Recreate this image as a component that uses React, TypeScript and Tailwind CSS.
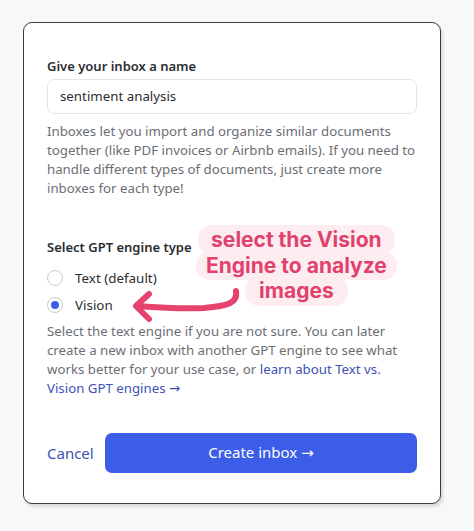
import { useState } from 'react';

const ui = "font-['Noto_Sans',sans-serif]";

function Radio({ checked, label, onClick }: { checked: boolean; label: string; onClick: () => void }) {
  return (
    <button type="button" onClick={onClick} className="flex h-[27px] items-center gap-[12px] text-left">
      <span className="flex h-[16px] w-[16px] items-center justify-center rounded-full border border-[#c9ccd3] bg-white">
        {checked && <span className="h-[8px] w-[8px] rounded-full bg-[#3b5de7]" />}
      </span>
      <span className="text-[13.4px] text-[#2b2d31]">{label}</span>
    </button>
  );
}

export default function App() {
  const [engine, setEngine] = useState<'text' | 'vision'>('vision');

  return (
    <div className={`min-h-[531px] w-[474px] bg-[#f6f8fa] pl-[23px] pt-[22px] ${ui}`}>
      <div className="relative w-[418px] rounded-[9px] border-[1.5px] border-[#3c3c3c] bg-white px-[23px] pb-[29.5px] pt-[33px] shadow-[2px_3px_3px_rgba(0,0,0,0.12)]">
        {/* Name field */}
        <label className="block text-[13px] font-semibold leading-[20px] text-[#2b2d31]">Give your inbox a name</label>
        <div className="mt-[3px] flex h-[35px] items-center rounded-[7px] border border-[#e3e5e9] px-[12px] text-[13.3px] text-[#2b2d31]">
          sentiment analysis
        </div>
        <p className="mt-[8px] text-[13.25px] leading-[19px] text-[#6b6e75]">
          Inboxes let you import and organize similar documents together (like PDF invoices or Airbnb emails). If you
          need to handle different types of documents, just create more inboxes for each type!
        </p>

        {/* Engine */}
        <div className="mt-[39px] text-[13px] font-semibold leading-[20px] text-[#2b2d31]">Select GPT engine type</div>
        <div className="mt-[7.5px] flex flex-col">
          <Radio checked={engine === 'text'} label="Text (default)" onClick={() => setEngine('text')} />
          <Radio checked={engine === 'vision'} label="Vision" onClick={() => setEngine('vision')} />
        </div>
        <p className="mt-[3px] text-[13.25px] leading-[19px] text-[#6b6e75]">
          Select the text engine if you are not sure. You can later create a new inbox with another GPT engine to see
          what works better for your use case, or{' '}
          <a className="text-[#3d51b5]">
            learn about Text vs. Vision GPT engines <span className="font-['DejaVu_Sans',sans-serif]">→</span>
          </a>
        </p>

        {/* Actions */}
        <div className="mt-[35.5px] flex items-center">
          <button className="w-[58px] text-left text-[15px] text-[#3d51b5]">Cancel</button>
          <button className="h-[40px] flex-1 rounded-[7px] bg-[#3b5de7] text-[15px] text-white">
            Create inbox <span className="font-['DejaVu_Sans',sans-serif]">→</span>
          </button>
        </div>

        {/* Annotation */}
        <div className="absolute left-[172px] top-[202px] flex flex-col items-center font-['Inter',sans-serif] text-[21px] font-bold leading-[25.5px] text-[#e1426d]">
          <span className="rounded-[14px] bg-[#fdedf1] px-[13px] py-[2px]">select the Vision</span>
          <span className="-mt-[4px] rounded-[14px] bg-[#fdedf1] px-[10px] py-[2px]">Engine to analyze</span>
          <span className="-mt-[4px] rounded-[14px] bg-[#fdedf1] px-[14px] py-[2px]">images</span>
        </div>
        <svg className="absolute left-[100px] top-[258px]" width="125" height="46" viewBox="0 0 125 46">
          <path
            d="M112 10 C114 22 104 25 80 27 C60 28 40 27 13 25"
            fill="none"
            stroke="#e5436e"
            strokeWidth="6"
            strokeLinecap="round"
          />
          <path
            d="M25 13 L12 25 L25 38"
            fill="none"
            stroke="#e5436e"
            strokeWidth="6"
            strokeLinecap="round"
            strokeLinejoin="round"
          />
        </svg>
      </div>
    </div>
  );
}
